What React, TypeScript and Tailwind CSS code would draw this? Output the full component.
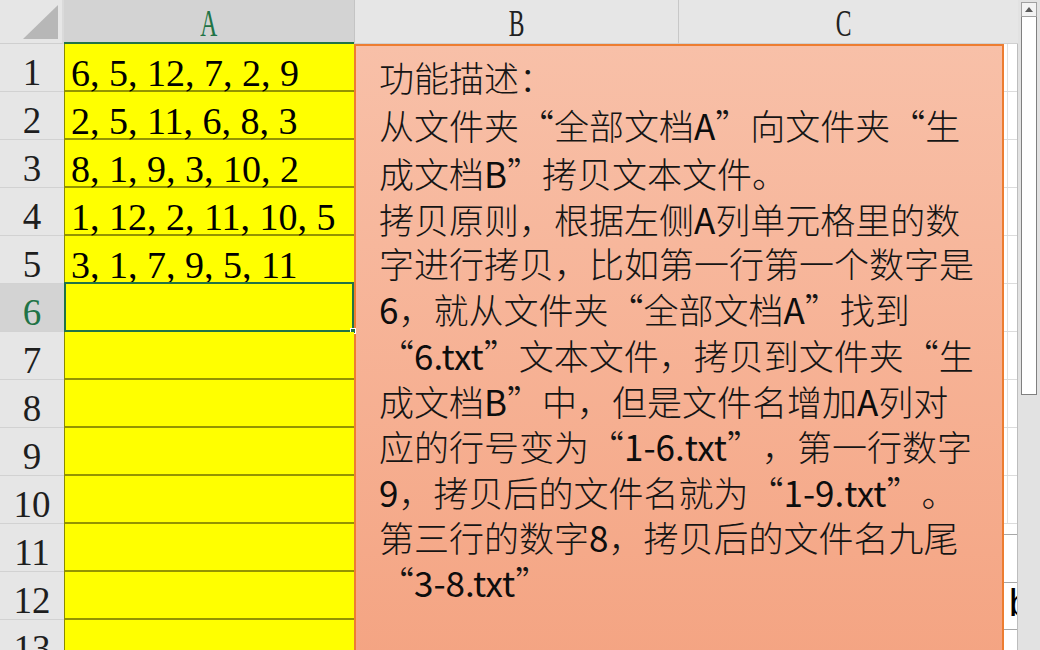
import React from "react";

const cells: string[] = [
  "6, 5, 12, 7, 2, 9",
  "2, 5, 11, 6, 8, 3",
  "8, 1, 9, 3, 10, 2",
  "1, 12, 2, 11, 10, 5",
  "3, 1, 7, 9, 5, 11",
  "",
  "",
  "",
  "",
  "",
  "",
  "",
  "",
];

const lines: { t: string; h: string }[] = [
  { t: "功能描述：", h: "h-[49px] leading-[49px]" },
  { t: "从文件夹“全部文档A”向文件夹“生", h: "h-[48px] leading-[48px]" },
  { t: "成文档B”拷贝文本文件。", h: "h-[48px] leading-[48px]" },
  { t: "拷贝原则，根据左侧A列单元格里的数", h: "h-[43px] leading-[43px]" },
  { t: "字进行拷贝，比如第一行第一个数字是", h: "h-[46px] leading-[46px]" },
  { t: "6，就从文件夹“全部文档A”找到", h: "h-[46px] leading-[46px]" },
  { t: "“6.txt”文本文件，拷贝到文件夹“生", h: "h-[46px] leading-[46px]" },
  { t: "成文档B”中，但是文件名增加A列对", h: "h-[45px] leading-[45px]" },
  { t: "应的行号变为“1-6.txt”，第一行数字", h: "h-[46px] leading-[46px]" },
  { t: "9，拷贝后的文件名就为“1-9.txt”。", h: "h-[45px] leading-[45px]" },
  { t: "第三行的数字8，拷贝后的文件名九尾", h: "h-[45px] leading-[45px]" },
  { t: "“3-8.txt”", h: "h-[46px] leading-[46px]" },
];

function Segments({ text }: { text: string }) {
  const parts = text.split(/([A-Za-z0-9.\-]+)/);
  return (
    <>
      {parts.map((p, i) =>
        /^[A-Za-z0-9.\-]+$/.test(p) ? (
          <span key={i} className="font-normal text-[#0d0d0d]">
            {p}
          </span>
        ) : (
          <span key={i}>{p}</span>
        )
      )}
    </>
  );
}

function HeaderLetter({ ch, green }: { ch: string; green?: boolean }) {
  return (
    <span
      className={
        "inline-block scale-x-[0.62] font-['Liberation_Serif',serif] text-[38px] leading-[36px] pt-[5px] " +
        (green ? "text-[#217346]" : "text-[#222]")
      }
    >
      {ch}
    </span>
  );
}

export default function App() {
  return (
    <div className="w-[1040px] h-[650px] overflow-hidden bg-white flex flex-row">
      {/* main grid area */}
      <div className="w-[1018px] h-[650px] flex flex-col overflow-hidden">
        {/* column headers */}
        <div className="h-[44px] flex flex-row shrink-0">
          <div className="w-[64px] h-[44px] bg-[#e6e6e6] border-r-[2px] border-r-[#dadada] border-b border-b-[#cfcfcf] flex items-start justify-end pt-[5px] pr-[2px]">
            <svg width="38" height="35" viewBox="0 0 38 35">
              <polygon points="1,34 36,0 36,34" fill="#b7b7b7" />
            </svg>
          </div>
          <div className="w-[290px] h-[44px] bg-[#d3d3d3] border-b-[2px] border-b-[#217346] flex justify-center items-start">
            <HeaderLetter ch="A" green />
          </div>
          <div className="w-[324px] h-[44px] bg-[#e6e6e6] border-l border-l-[#c4c4c4] border-b border-b-[#d0d0d0] flex justify-center items-start">
            <HeaderLetter ch="B" />
          </div>
          <div className="w-[340px] h-[44px] bg-[#e6e6e6] border-l border-l-[#c8c8c8] border-b border-b-[#d0d0d0] flex justify-center items-start pr-[10px]">
            <HeaderLetter ch="C" />
          </div>
        </div>

        {/* body */}
        <div className="flex flex-row flex-1 overflow-hidden">
          {/* row labels */}
          <div className="w-[64px] flex flex-col shrink-0">
            {cells.map((_, i) => (
              <div
                key={i}
                className={
                  "h-[48px] shrink-0 border-b border-b-[#d2d2d2] text-center font-['Liberation_Serif',serif] text-[37px] leading-[36px] pt-[11px] " +
                  (i === 5
                    ? "bg-[#d3d3d3] text-[#217346]"
                    : "bg-[#e6e6e6] text-[#1e1e1e]")
                }
              >
                {i + 1}
              </div>
            ))}
          </div>

          {/* column A */}
          <div className="w-[290px] flex flex-col shrink-0 border-l border-l-[#8a8a00]">
            {cells.map((c, i) => (
              <div
                key={i}
                className="relative h-[48px] shrink-0 bg-[#ffff00] border-b-[2px] border-b-[#949400] pl-[6px] font-['Liberation_Serif',serif] text-[38px] leading-[36px] pt-[11px] text-black whitespace-nowrap"
              >
                {c}
                {i === 5 && (
                  <div className="absolute left-[-1px] right-0 top-[-2px] bottom-[-2px] border-2 border-[#217346]">
                    <div className="absolute right-[-4px] bottom-[-4px] w-[6px] h-[6px] bg-[#217346] border border-white" />
                  </div>
                )}
              </div>
            ))}
          </div>

          {/* text box shape */}
          <div className="w-[650px] h-[640px] shrink-0 border-2 border-[#ed7d31] bg-gradient-to-b from-[#f8c0a8] to-[#f4a381] pl-[23px] pt-[6px] font-['Noto_Sans_CJK_SC',sans-serif] text-[35px] text-[#151515] font-light [text-spacing-trim:space-all]">
            {lines.map((l, i) => (
              <div key={i} className={"whitespace-nowrap " + l.h}>
                <Segments text={l.t} />
              </div>
            ))}
          </div>

          {/* narrow visible strip of grid */}
          <div className="w-[14px] shrink-0 flex flex-col bg-white border-r border-r-[#bdbdbd] overflow-hidden">
            {Array.from({ length: 10 }).map((_, i) => (
              <div key={i} className="h-[48px] shrink-0 border-b border-b-[#dcdcdc] flex flex-row">
                <div className="w-[4px] h-full border-r border-r-[#e0e0e0]" />
              </div>
            ))}
            <div className="h-[10px] shrink-0" />
            <div className="h-[48px] shrink-0 border-t border-t-[#a8a8a8]" />
            <div className="h-[47px] shrink-0 border-t border-t-[#a8a8a8] pl-[5px] font-['Liberation_Sans',sans-serif] text-[38px] leading-[40px] text-black overflow-hidden whitespace-nowrap">
              b
            </div>
            <div className="h-[30px] shrink-0 border-t border-t-[#a8a8a8]" />
          </div>
        </div>
      </div>

      {/* vertical scrollbar */}
      <div className="w-[22px] h-[650px] bg-[#e2e2e2] pt-[2px] pl-[3px] pr-[3px] flex flex-col">
        <div className="h-[15px] border border-[#a0a0a0] bg-[#f3f3f3] flex items-center justify-center">
          <svg width="8" height="5" viewBox="0 0 8 5">
            <polygon points="0,5 4,0 8,5" fill="#5a5a5a" />
          </svg>
        </div>
        <div className="h-[378px] border border-t-0 border-[#808080] bg-white" />
      </div>
    </div>
  );
}
